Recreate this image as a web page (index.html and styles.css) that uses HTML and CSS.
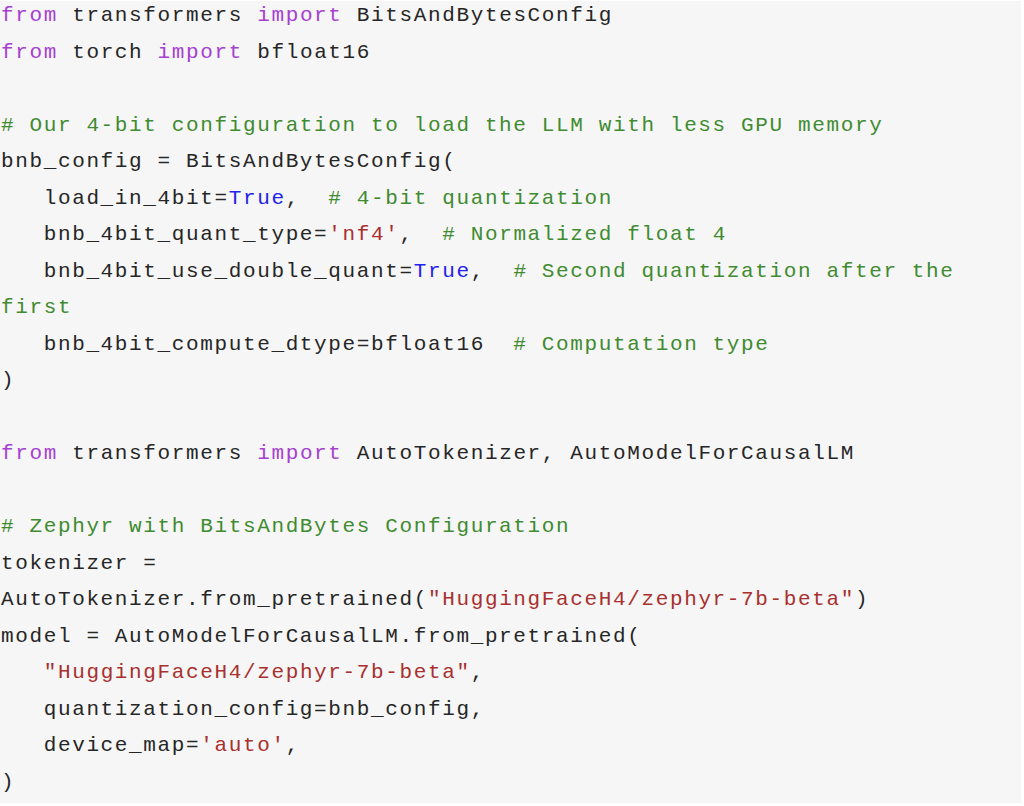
FILE: index.html
```html
<!DOCTYPE html>
<html>
<head>
<meta charset="utf-8">
<link rel="stylesheet" href="styles.css">
</head>
<body>
<pre class="code"><code class="code-inner"><span class="kw">from</span> transformers <span class="kw">import</span> BitsAndBytesConfig
<span class="kw">from</span> torch <span class="kw">import</span> bfloat16

<span class="cm"># Our 4-bit configuration to load the LLM with less GPU memory</span>
bnb_config = BitsAndBytesConfig(
   load_in_4bit=<span class="bl">True</span>,  <span class="cm"># 4-bit quantization</span>
   bnb_4bit_quant_type=<span class="st">'nf4'</span>,  <span class="cm"># Normalized float 4</span>
   bnb_4bit_use_double_quant=<span class="bl">True</span>,  <span class="cm"># Second quantization after the</span>
<span class="cm">first</span>
   bnb_4bit_compute_dtype=bfloat16  <span class="cm"># Computation type</span>
)

<span class="kw">from</span> transformers <span class="kw">import</span> AutoTokenizer, AutoModelForCausalLM

<span class="cm"># Zephyr with BitsAndBytes Configuration</span>
tokenizer =
AutoTokenizer.from_pretrained(<span class="st">"HuggingFaceH4/zephyr-7b-beta"</span>)
model = AutoModelForCausalLM.from_pretrained(
   <span class="st">"HuggingFaceH4/zephyr-7b-beta"</span>,
   quantization_config=bnb_config,
   device_map=<span class="st">'auto'</span>,
)</code></pre>
</body>
</html>
```

FILE: styles.css
```css
html, body {
  margin: 0;
  padding: 0;
  background: #ffffff;
}

.code {
  margin: 1px 3px 0 0;
  padding: 0 0 6px 1px;
  height: 802px;
  box-sizing: border-box;
  background: #f6f6f6;
  overflow: hidden;
}

.code-inner {
  display: block;
  margin-top: -3px;
  font-family: "Liberation Mono", "Courier New", monospace;
  font-size: 21px;
  letter-spacing: 1.63px;
  line-height: 36.5px;
  color: #262626;
  white-space: pre;
}

.kw { color: #a640d0; }
.cm { color: #3f8b30; }
.st { color: #a8302e; }
.bl { color: #2222ee; }
```
